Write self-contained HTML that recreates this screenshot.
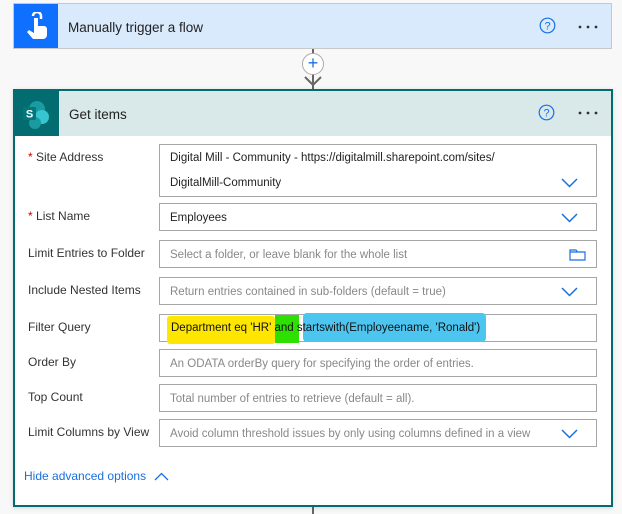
<!DOCTYPE html>
<html><head><meta charset="utf-8"><style>
*{box-sizing:border-box;margin:0;padding:0}
body{width:622px;height:513px;background:#f8f8f8;font-family:"Liberation Sans",sans-serif;font-size:12px;color:#222;position:relative;overflow:hidden}
.abs{position:absolute}
.box{position:absolute;left:159px;width:438px;border:1px solid #a6a6a6;background:#fff}
.lbl{position:absolute;left:28px;font-size:12px;color:#333}
.ph{position:absolute;left:10px;color:#888;font-size:11.5px;white-space:nowrap}
.chev{position:absolute;right:18px}
.req{color:#c00}
</style></head><body>
<div class="abs" style="left:13px;top:3px;width:599px;height:46px;background:#d9eafc;border:1px solid #c8c8c8"></div>
<div class="abs" style="left:14px;top:4px;width:44px;height:44px;background:#0f6fff"></div>
<svg class="abs" style="left:24px;top:12px" width="24" height="28" viewBox="0 0 24 28"><path d="M9 4a4 4 0 0 1 8 0v3" stroke="#fff" stroke-width="2.5" fill="none"/><path d="M10 6h4v8h6a3 3 0 0 1 3 3v6a4 4 0 0 1-4 4H9l-6-7 2-2 5 3z" fill="#fff"/></svg>
<div class="abs" style="left:68px;top:20px;font-size:13.5px;color:#222">Manually trigger a flow</div>
<svg class="abs" style="left:539px;top:17px" width="17" height="17"><circle cx="8.5" cy="8.5" r="7.3" stroke="#1a6fe0" stroke-width="1.2" fill="none"/><text x="8.5" y="12.5" text-anchor="middle" font-size="11" fill="#1a6fe0" font-family="Liberation Sans">?</text></svg>
<svg class="abs" style="left:578px;top:25px" width="22" height="5"><circle cx="2" cy="2" r="1.4" fill="#333"/><circle cx="10" cy="2" r="1.4" fill="#333"/><circle cx="18" cy="2" r="1.4" fill="#333"/></svg>
<div class="abs" style="left:312px;top:49px;width:2px;height:40px;background:#666"></div>
<div class="abs" style="left:302px;top:53px;width:22px;height:22px;border-radius:50%;background:#fff;border:1.5px solid #aaa;color:#1a6fe0;font-size:18px;line-height:18px;text-align:center">+</div>
<svg class="abs" style="left:304px;top:76px" width="18" height="12"><path d="M1 1l8 8 8-8" stroke="#666" stroke-width="2" fill="none"/></svg>
<div class="abs" style="left:312px;top:506px;width:2px;height:8px;background:#666"></div>
<div class="abs" style="left:13px;top:89px;width:600px;height:418px;background:#fff;border:2px solid #036c70;box-shadow:0 1px 4px rgba(0,0,0,.15)"></div>
<div class="abs" style="left:15px;top:91px;width:596px;height:45px;background:#d9e8e8"></div>
<div class="abs" style="left:15px;top:91px;width:44px;height:45px;background:#036c70"></div>
<svg class="abs" style="left:20px;top:98px" width="34" height="32"><circle cx="17" cy="11" r="8" fill="#1a9ba1"/><circle cx="22" cy="19" r="7" fill="#37c6d0"/><circle cx="15" cy="25" r="6" fill="#1a9ba1"/><rect x="3" y="9" width="13" height="13" rx="1.5" fill="#03787c"/><text x="9.5" y="19.5" text-anchor="middle" font-size="11" font-weight="bold" fill="#fff" font-family="Liberation Sans">S</text></svg>
<div class="abs" style="left:69px;top:107px;font-size:13.5px;color:#222">Get items</div>
<svg class="abs" style="left:538px;top:104px" width="17" height="17"><circle cx="8.5" cy="8.5" r="7.3" stroke="#1a6fe0" stroke-width="1.2" fill="none"/><text x="8.5" y="12.5" text-anchor="middle" font-size="11" fill="#1a6fe0" font-family="Liberation Sans">?</text></svg>
<svg class="abs" style="left:578px;top:111px" width="22" height="5"><circle cx="2" cy="2" r="1.4" fill="#333"/><circle cx="10" cy="2" r="1.4" fill="#333"/><circle cx="18" cy="2" r="1.4" fill="#333"/></svg>

<div class="lbl" style="top:150px"><span class="req">* </span>Site Address</div>
<div class="box" style="top:144px;height:53px"><div class="ph" style="top:7px;color:#222">Digital Mill - Community - https://digitalmill.sharepoint.com/sites/</div><div class="ph" style="top:32px;color:#222">DigitalMill-Community</div><svg class="chev" style="top:33px" width="17" height="10"><path d="M1 1l7.5 7.5L16 1" stroke="#1a6fe0" stroke-width="1.5" fill="none"/></svg></div>

<div class="lbl" style="top:209px"><span class="req">* </span>List Name</div>
<div class="box" style="top:203px;height:28px"><div class="ph" style="top:8px;color:#222">Employees</div><svg class="chev" style="top:9px" width="17" height="10"><path d="M1 1l7.5 7.5L16 1" stroke="#1a6fe0" stroke-width="1.5" fill="none"/></svg></div>

<div class="lbl" style="top:246px">Limit Entries to Folder</div>
<div class="box" style="top:240px;height:28px"><div class="ph" style="top:8px">Select a folder, or leave blank for the whole list</div>
<svg class="abs" style="right:10px;top:6px" width="17" height="14"><path d="M1 3h6l1.5 2H16v8H1z M1 5h15" stroke="#1a6fe0" stroke-width="1.2" fill="none"/></svg></div>

<div class="lbl" style="top:283px">Include Nested Items</div>
<div class="box" style="top:277px;height:28px"><div class="ph" style="top:8px">Return entries contained in sub-folders (default = true)</div><svg class="chev" style="top:9px" width="17" height="10"><path d="M1 1l7.5 7.5L16 1" stroke="#1a6fe0" stroke-width="1.5" fill="none"/></svg></div>

<div class="lbl" style="top:320px">Filter Query</div>
<div class="box" style="top:314px;height:28px"></div>
<div class="abs" style="left:167px;top:316px;width:108px;height:28px;background:#ffe600;border-radius:3px"></div>
<div class="abs" style="left:275px;top:315px;width:24px;height:28px;background:#2ee000"></div>
<div class="abs" style="left:303px;top:313px;width:183px;height:29px;background:#4cc6f0;border-radius:4px"></div>
<div class="abs" style="left:171px;top:322px;color:#111;white-space:nowrap;font-size:11.5px">Department eq 'HR' and startswith(Employeename, 'Ronald')</div>

<div class="lbl" style="top:355px">Order By</div>
<div class="box" style="top:349px;height:28px"><div class="ph" style="top:8px">An ODATA orderBy query for specifying the order of entries.</div></div>

<div class="lbl" style="top:390px">Top Count</div>
<div class="box" style="top:384px;height:28px"><div class="ph" style="top:8px">Total number of entries to retrieve (default = all).</div></div>

<div class="lbl" style="top:425px">Limit Columns by View</div>
<div class="box" style="top:419px;height:28px"><div class="ph" style="top:8px">Avoid column threshold issues by only using columns defined in a view</div><svg class="chev" style="top:9px" width="17" height="10"><path d="M1 1l7.5 7.5L16 1" stroke="#1a6fe0" stroke-width="1.5" fill="none"/></svg></div>

<div class="abs" style="left:24px;top:469px;color:#1a6fe0;font-size:12px">Hide advanced options</div>
<svg class="abs" style="left:154px;top:472px" width="15" height="9"><path d="M1 8l6.5-6.5L14 8" stroke="#1a6fe0" stroke-width="1.3" fill="none"/></svg>
</body></html>
